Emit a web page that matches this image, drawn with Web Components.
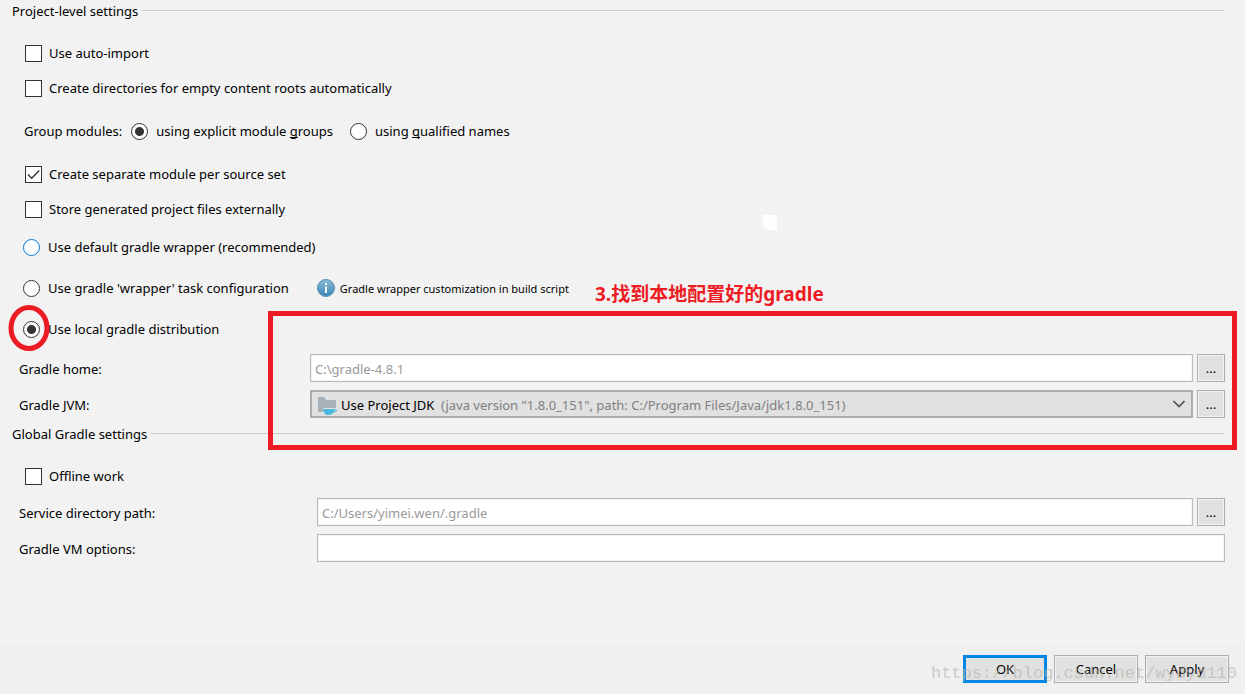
<!DOCTYPE html>
<html lang="en">
<head>
<meta charset="utf-8">
<title>Gradle settings</title>
<style>
  body { margin: 0; background: #f2f2f2; color: #000; font: 13px/18px "Noto Sans", "Open Sans", "Noto Sans CJK SC", sans-serif; }
</style>
</head>
<body>
<gs-dialog></gs-dialog>

<template id="heading-tpl">
  <style>
    :host { display: flex; gap: 4px; height: 18px; padding: 0 21px 0 12px; }
    h2 { margin: 0; font: inherit; white-space: nowrap; }
    i { flex: 1; height: 1px; margin-top: 8px; background: #cdcdcd; }
  </style>
  <h2><slot></slot></h2><i></i>
</template>

<template id="choice-tpl">
  <style>
    :host { display: flex; height: 18px; }
    label { display: flex; align-items: center; gap: 7px; white-space: nowrap; }
    :host([type=radio]) label { gap: 8px; }
    input { appearance: none; flex: none; box-sizing: border-box; width: 17px; height: 17px; margin: 0; border: 1px solid #333; background: #fff; }
    input[type=radio] { border-radius: 50%; }
    input[type=radio]:checked { background: radial-gradient(circle, #333 4px, #fff 5px); }
    input[type=checkbox]:checked { background: #fff url("data:image/svg+xml,%3Csvg xmlns='http://www.w3.org/2000/svg' viewBox='0 0 15 15'%3E%3Cpath d='M2 7.5l3.7 3.7L13.2 3.6' fill='none' stroke='%23333' stroke-width='1.4'/%3E%3C/svg%3E"); }
    :host([highlight]) input { border-color: #0078d7; }
  </style>
  <label><input><span><slot></slot></span></label>
</template>

<template id="field-tpl">
  <style>
    :host { display: grid; grid-template-columns: var(--label, 291px) 1fr auto; align-items: center; height: 28px; margin: 0 20px 8px 19px; }
    label { padding-top: 2px; }
    input { box-sizing: border-box; width: 100%; min-width: 0; height: 28px; margin: 0; padding: 1px 4px 0; border: 1px solid #bababa; border-radius: 0; background: #fff; color: #999; font: inherit; outline: 1px solid #f2f2f2; outline-offset: -2px; }
    button { width: 28px; height: 28px; margin: 0 0 0 4px; padding: 0; border: 1px solid #adadad; background: #e1e1e1; box-shadow: inset 0 0 0 1px #f2f2f2; color: #000; font: inherit; }
    .combo { display: grid; position: relative; align-items: center; }
    .combo > * { grid-area: 1 / 1; }
    select { appearance: none; box-sizing: border-box; width: 100%; height: 28px; margin: 0; padding: 2px 29px 0; border: 2px solid #adadad; border-radius: 0; background: #e1e1e1; color: #000; font: inherit; }
    .detail { padding: 2px 0 0 131px; color: #808080; pointer-events: none; white-space: nowrap; overflow: hidden; z-index: 1; }
    svg { pointer-events: none; z-index: 1; }
    .folder { margin: 3px 0 0 8px; }
    .arrow { justify-self: end; margin-right: 8px; }
  </style>
  <label for="control"></label>
</template>

<template id="button-tpl">
  <style>
    :host { display: block; }
    button { box-sizing: border-box; width: 84px; height: 28px; padding: 0; border: 1px solid #adadad; background: #e1e1e1; box-shadow: inset 0 0 0 1px #f2f2f2; color: #000; font: inherit; }
    :host([primary]) button { border: 3px solid #0086e4; box-shadow: none; }
  </style>
  <button type="button"><slot></slot></button>
</template>

<template id="hint-tpl">
  <style>
    :host { display: flex; align-items: center; gap: 5px; height: 18px; font-size: 11px; white-space: nowrap; }
    span { padding-top: 2px; }
  </style>
  <svg width="18" height="18" viewBox="0 0 18 18" aria-hidden="true">
    <defs><linearGradient id="g" x2="0" y2="1"><stop stop-color="#8dbbd8"/><stop offset="1" stop-color="#3787b5"/></linearGradient></defs>
    <circle cx="9" cy="9" r="8.5" fill="url(#g)" stroke="#568fb3"/>
    <path d="M8 4h2v2H8zM8 7.500h2V14H8z" fill="#fff"/>
  </svg>
  <span><slot></slot></span>
</template>

<template id="dialog-tpl">
  <style>
    :host { display: flex; flex-direction: column; min-height: 100vh; position: relative; overflow: hidden; }
    main { flex: 1; padding-top: 2px; }
    u { text-decoration-skip-ink: none; }
    .checks { display: grid; gap: 17px; padding-left: 25px; }
    .first { margin-top: 24px; }
    .modules { display: flex; margin: 25px 0 25px 24px; }
    .modules gs-choice { margin-left: 9px; }
    .modules gs-choice + gs-choice { margin-left: 17px; }
    .sources { display: grid; gap: 23px; padding: 20px 0 16px 23px; }
    .wrapper { display: flex; gap: 28px; }
    .local { position: relative; }
    .offline { margin: 24px 0 13px; }
    .global { margin-top: -1px; }
    .wide { --label: 298px; }
    footer { display: flex; justify-content: flex-end; gap: 7px; padding: 11px 16px; background: #f0f0f0; }
    .frame { position: absolute; inset: 311px 8px auto 268px; height: 129px; border: 5px solid #ed1c24; pointer-events: none; }
    .ring { position: absolute; left: -15px; top: -16px; pointer-events: none; }
    .note { position: absolute; left: 595px; top: 282px; color: #ed1c24; font: bold 19px/24px "Noto Sans", "Noto Sans CJK SC", sans-serif; white-space: nowrap; }
    .smudge { position: absolute; left: 763px; top: 215px; }
    .mark { position: absolute; right: 8px; bottom: 8px; color: #b4b4a8; opacity: .6; font: 17px/24px "Liberation Mono", monospace; pointer-events: none; }
  </style>
  <main>
    <gs-heading>Project-level settings</gs-heading>
    <div class="checks first">
      <gs-choice type="checkbox">Use auto-import</gs-choice>
      <gs-choice type="checkbox">Create directories for empty content roots automatically</gs-choice>
    </div>
    <div class="modules">
      <span>Group modules:</span>
      <gs-choice type="radio" name="modules" checked>using explicit module <u>g</u>roups</gs-choice>
      <gs-choice type="radio" name="modules">using <u>q</u>ualified names</gs-choice>
    </div>
    <div class="checks">
      <gs-choice type="checkbox" checked>Create separate module per source set</gs-choice>
      <gs-choice type="checkbox">Store generated project files externally</gs-choice>
    </div>
    <div class="sources">
      <gs-choice type="radio" name="source" highlight>Use default gradle wrapper (recommended)</gs-choice>
      <div class="wrapper">
        <gs-choice type="radio" name="source">Use gradle 'wrapper' task configuration</gs-choice>
        <gs-hint>Gradle wrapper customization in build script</gs-hint>
      </div>
      <div class="local">
        <gs-choice type="radio" name="source" checked>Use local gradle distribution</gs-choice>
        <svg class="ring" width="42" height="48" viewBox="0 0 42 48" aria-hidden="true"><ellipse cx="21" cy="24" rx="18" ry="20.500" fill="none" stroke="#ed1c24" stroke-width="5"/></svg>
      </div>
    </div>
    <gs-field label="Gradle home:" value="C:\gradle-4.8.1" browse></gs-field>
    <gs-field label="Gradle JVM:" kind="select" value="Use Project JDK" detail='(java version "1.8.0_151", path: C:/Program Files/Java/jdk1.8.0_151)' browse></gs-field>
    <gs-heading class="global">Global Gradle settings</gs-heading>
    <div class="checks offline"><gs-choice type="checkbox">Offline work</gs-choice></div>
    <gs-field class="wide" label="Service directory path:" value="C:/Users/yimei.wen/.gradle" browse></gs-field>
    <gs-field class="wide" label="Gradle VM options:" value=""></gs-field>
  </main>
  <footer>
    <gs-button primary>OK</gs-button>
    <gs-button>Cancel</gs-button>
    <gs-button>Apply</gs-button>
  </footer>
  <svg class="smudge" width="14" height="15" aria-hidden="true"><path d="M0 0h12v2h2v13H5v-2H1v-2H0z" fill="#fff"/></svg>
  <div class="note">3.找到本地配置好的gradle</div>
  <div class="frame"></div>
  <div class="mark">https://blog.csdn.net/wydyd110</div>
</template>

<script>
  class Base extends HTMLElement {
    constructor() {
      super();
      this.attachShadow({ mode: 'open' }).append(document.getElementById(this.constructor.tpl).content.cloneNode(true));
    }
  }
  const define = (name, tpl, cls = class extends Base {}) => { cls.tpl = tpl; customElements.define(name, cls); };

  define('gs-heading', 'heading-tpl');
  define('gs-hint', 'hint-tpl');
  define('gs-button', 'button-tpl');

  define('gs-choice', 'choice-tpl', class extends Base {
    connectedCallback() {
      const input = this.shadowRoot.querySelector('input');
      input.type = this.getAttribute('type');
      input.checked = this.hasAttribute('checked');
      // Radios live in separate shadow roots, so exclusivity is kept by name.
      input.onchange = () => {
        const name = this.getAttribute('name');
        if (!name) return;
        for (const other of this.getRootNode().querySelectorAll(`gs-choice[name="${name}"]`))
          if (other !== this) other.shadowRoot.querySelector('input').checked = false;
      };
    }
  });

  define('gs-field', 'field-tpl', class extends Base {
    connectedCallback() {
      const root = this.shadowRoot;
      const label = this.getAttribute('label');
      const value = this.getAttribute('value');
      root.querySelector('label').textContent = label;
      if (this.getAttribute('kind') === 'select') {
        const combo = document.createElement('div');
        combo.className = 'combo';
        combo.innerHTML = `
          <select id="control"><option></option></select>
          <svg class="folder" width="20" height="18" viewBox="0 0 20 18" aria-hidden="true">
            <path d="M0 0h6l2 3h10v8H5v4H0z" fill="#a7b2bb"/>
            <path d="M5 12h11.500q2.500 0 2.500 1.500T15.500 15.500Q13.500 18 11 18H9Q5.500 17 5 12z" fill="#4cb8e0"/>
            <path d="M16 13.200h1.500v1H16z" fill="#e1e1e1"/>
          </svg>
          <span class="detail"></span>
          <svg class="arrow" width="12" height="8" viewBox="0 0 12 8" aria-hidden="true"><path d="M.5 1L6 6.500 11.500 1" fill="none" stroke="#555" stroke-width="1.700"/></svg>`;
        combo.querySelector('option').textContent = value;
        combo.querySelector('.detail').textContent = this.getAttribute('detail');
        root.append(combo);
      } else {
        const input = document.createElement('input');
        input.id = 'control';
        input.value = value;
        root.append(input);
      }
      if (this.hasAttribute('browse')) {
        const button = document.createElement('button');
        button.type = 'button';
        button.textContent = '...';
        button.setAttribute('aria-label', 'Browse ' + label);
        root.append(button);
      }
    }
  });

  define('gs-dialog', 'dialog-tpl');
</script>
</body>
</html>
